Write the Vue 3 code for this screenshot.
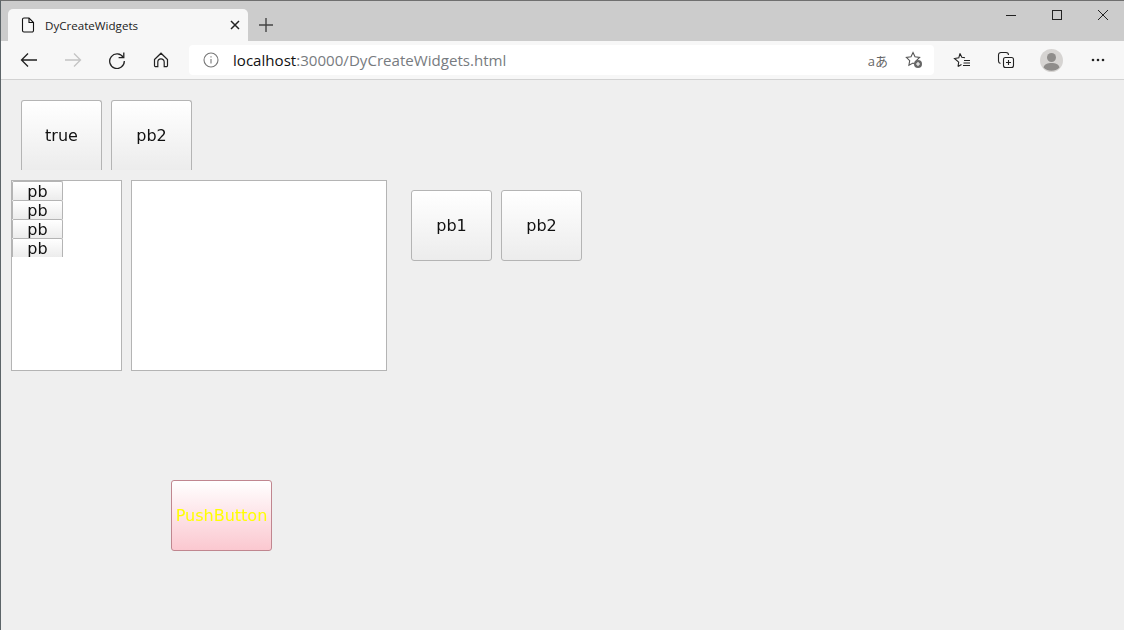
<script setup>
const topButtons = ['true', 'pb2']
const sideButtons = ['pb1', 'pb2']
const listItems = ['pb', 'pb', 'pb', 'pb']
</script>

<template>
  <div class="window">
    <!-- tab strip -->
    <div class="tabstrip">
      <div class="tab">
        <svg class="tab-icon" width="14" height="16" viewBox="0 0 14 16" fill="none" stroke="#111" stroke-width="1.1">
          <path d="M1.5 2.5a1.5 1.5 0 0 1 1.5-1.5h5l4.500 4.500v8a1.500 1.500 0 0 1-1.500 1.500h-8a1.500 1.500 0 0 1-1.500-1.500z" />
          <path d="M8 1v4.500h4.500" />
        </svg>
        <span class="tab-title">DyCreateWidgets</span>
        <svg class="tab-close" width="10" height="10" viewBox="0 0 10 10" stroke="#222" stroke-width="1.5">
          <path d="M1 1l8 8M9 1l-8 8" />
        </svg>
      </div>
      <svg class="new-tab" width="16" height="16" viewBox="0 0 16 16" stroke="#444" stroke-width="1.4">
        <path d="M8 1v14M1 8h14" />
      </svg>
      <div class="win-controls">
        <svg width="12" height="12" viewBox="0 0 12 12" stroke="#222" stroke-width="1"><path d="M1 6.500h10" /></svg>
        <svg width="12" height="12" viewBox="0 0 12 12" stroke="#222" stroke-width="1" fill="none"><rect x="1.500" y="1.500" width="9" height="9" /></svg>
        <svg width="12" height="12" viewBox="0 0 12 12" stroke="#222" stroke-width="1"><path d="M1 1l10 10M11 1L1 11" /></svg>
      </div>
    </div>

    <!-- toolbar -->
    <div class="toolbar">
      <svg class="nav-icon" width="18" height="16" viewBox="0 0 18 16" fill="none" stroke="#222" stroke-width="1.3">
        <path d="M17 8H1.500M8 1.500L1.500 8 8 14.500" />
      </svg>
      <svg class="nav-icon" width="18" height="16" viewBox="0 0 18 16" fill="none" stroke="#c4c4c4" stroke-width="1.300">
        <path d="M1 8h15.500M10 1.500L16.500 8 10 14.500" />
      </svg>
      <svg class="nav-icon" width="18" height="18" viewBox="0 0 18 18" fill="none" stroke="#222" stroke-width="1.300">
        <path d="M15.300 6.500A7.300 7.300 0 1 0 16.300 10" />
        <path d="M15.800 1.500v5.200h-5.200" />
      </svg>
      <svg class="nav-icon" width="16" height="16" viewBox="0 0 16 16" fill="none" stroke="#222" stroke-width="1.200">
        <path d="M1.500 7.500L8 1.200l6.500 6.300v6a1.200 1.200 0 0 1-1.200 1.200h-2.100V10a3.200 3.200 0 0 0-6.400 0v4.700H2.700a1.200 1.200 0 0 1-1.200-1.200z" />
      </svg>
      <div class="address">
        <svg width="16" height="16" viewBox="0 0 16 16" fill="none" stroke="#777" stroke-width="1.100">
          <circle cx="8" cy="8" r="7" />
          <path d="M8 7v4.500M8 4.200v1.200" />
        </svg>
        <span class="url"><span class="host">localhost</span>:30000/DyCreateWidgets.html</span>
        <span class="translate">aあ</span>
        <svg class="addr-star" width="18" height="18" viewBox="0 0 18 18">
          <path d="M8 1.500l2 4.300 4.600.6-3.300 3.200.8 4.600L8 12l-4.100 2.200.8-4.600L1.400 6.400 6 5.800z" fill="none" stroke="#555" stroke-width="1.100" />
          <circle cx="13" cy="13" r="4" fill="#666" />
          <path d="M13 11v4M11 13h4" stroke="#fff" stroke-width="1.100" />
        </svg>
      </div>
      <svg class="tool-icon" width="18" height="16" viewBox="0 0 18 16" fill="none" stroke="#222" stroke-width="1.100">
        <path d="M7 1.500L8.800 5.300l3.200.4M5 14.500l.7-4.300L1.500 6.500l4.300-.7L7 1.500M5 14.500l3.500-2" />
        <path d="M11 8.500h6M10.500 11h6.500M10 13.500h7" />
      </svg>
      <svg class="tool-icon" width="18" height="18" viewBox="0 0 18 18" fill="none" stroke="#222" stroke-width="1.100">
        <path d="M3.500 12.500A2.500 2.500 0 0 1 1.500 10V4a2.500 2.500 0 0 1 2.500-2.500h5A2.500 2.500 0 0 1 11.500 4" />
        <rect x="6.500" y="6.500" width="10" height="10" rx="2" />
        <path d="M11.500 9v5M9 11.500h5" />
      </svg>
      <svg class="avatar" width="23" height="23" viewBox="0 0 23 23">
        <circle cx="11.500" cy="11.500" r="11.500" fill="#d6d4d2" />
        <circle cx="11.500" cy="8.500" r="4.500" fill="#8f8d8b" />
        <path d="M3.500 18.500c1-3.500 4-4.500 8-4.500s7 1 8 4.500a11.500 11.500 0 0 1-16 0z" fill="#8f8d8b" />
      </svg>
      <svg class="more" width="14" height="4" viewBox="0 0 14 4" fill="#222">
        <circle cx="2" cy="2" r="1.300" /><circle cx="7" cy="2" r="1.300" /><circle cx="12" cy="2" r="1.300" />
      </svg>
    </div>

    <!-- page content -->
    <div class="page">
      <div class="row-top">
        <button v-for="label in topButtons" :key="label" class="qt-btn cut">{{ label }}</button>
      </div>
      <div class="row-mid">
        <div class="list-box">
          <button v-for="(label, i) in listItems" :key="i" class="list-btn">{{ label }}</button>
        </div>
        <div class="empty-box"></div>
        <div class="side-buttons">
          <button v-for="label in sideButtons" :key="label" class="qt-btn">{{ label }}</button>
        </div>
      </div>
      <button class="pink-btn">PushButton</button>
    </div>
  </div>
</template>

<style scoped>
.window {
  width: 1124px;
  height: 630px;
  overflow: hidden;
  display: flex;
  flex-direction: column;
  box-sizing: border-box;
  border-top: 1px solid #6f6f6f;
  border-left: 1px solid #5c6468;
  font-family: "Open Sans", "Noto Sans CJK JP", sans-serif;
}

.tabstrip {
  height: 40px;
  flex-shrink: 0;
  display: flex;
  align-items: flex-end;
  background: #cccccc;
  padding-left: 7px;
}

.tab {
  width: 240px;
  height: 32px;
  box-sizing: border-box;
  display: flex;
  align-items: center;
  background: #f7f7f7;
  border-radius: 5px 5px 0 0;
  padding: 0 6px 0 13px;
}

.tab-title {
  flex: 1;
  margin-left: 10px;
  font-size: 11.6px;
  color: #222;
}

.tab-close {
  margin-right: 2px;
}

.new-tab {
  margin: 0 0 8px 10px;
}

.win-controls {
  margin-left: auto;
  align-self: flex-start;
  display: flex;
  gap: 34px;
  padding: 8px 15px 0 0;
}

.toolbar {
  height: 39px;
  flex-shrink: 0;
  box-sizing: border-box;
  display: flex;
  align-items: center;
  background: #f7f7f7;
  border-bottom: 1px solid #d2d2d2;
  padding-left: 19px;
}

.nav-icon {
  margin-right: 26px;
  flex-shrink: 0;
}

.nav-icon:nth-child(3) {
  margin-right: 27px;
}

.nav-icon:nth-child(4) {
  margin-right: 20px;
}

.address {
  width: 745px;
  height: 30px;
  box-sizing: border-box;
  display: flex;
  align-items: center;
  background: #ffffff;
  border-radius: 4px;
  padding: 0 11px 0 14px;
}

.url {
  flex: 1;
  margin-left: 14px;
  font-size: 15.1px;
  color: #777b80;
}

.host {
  color: #111;
}

.translate {
  font-size: 13px;
  color: #666;
  margin-right: 17px;
}

.tool-icon {
  flex-shrink: 0;
  margin-left: 19px;
}

.tool-icon + .tool-icon {
  margin-left: 26px;
}

.avatar {
  flex-shrink: 0;
  margin-left: 25px;
}

.more {
  flex-shrink: 0;
  margin-left: 28px;
}

.page {
  flex: 1;
  background: #efefef;
  padding: 20px 0 0 10px;
  font-family: "DejaVu Sans", sans-serif;
}

.row-top {
  display: flex;
  gap: 9px;
  padding-left: 10px;
}

.qt-btn {
  width: 81px;
  height: 71px;
  padding: 0;
  box-sizing: border-box;
  border: 1px solid #b4b4b4;
  border-radius: 3px;
  background: linear-gradient(#ffffff, #ececec);
  font-family: inherit;
  font-size: 16px;
  color: #111;
  will-change: opacity;
}

.qt-btn.cut {
  height: 70px;
  border-bottom: none;
  border-radius: 3px 3px 0 0;
}

.row-mid {
  display: flex;
  align-items: flex-start;
  margin-top: 10px;
}

.list-box {
  width: 111px;
  height: 191px;
  box-sizing: border-box;
  display: flex;
  flex-direction: column;
  align-items: flex-start;
  background: #ffffff;
  border: 1px solid #b4b4b4;
}

.list-btn {
  width: 51px;
  height: 19px;
  padding: 0;
  box-sizing: border-box;
  border: 1px solid #b4b4b4;
  border-bottom: none;
  border-radius: 2px 2px 0 0;
  background: linear-gradient(#ffffff, #ececec);
  font-family: inherit;
  font-size: 16px;
  line-height: 19px;
  color: #111;
  will-change: opacity;
}

.empty-box {
  width: 256px;
  height: 191px;
  box-sizing: border-box;
  margin-left: 9px;
  background: #ffffff;
  border: 1px solid #b4b4b4;
}

.side-buttons {
  display: flex;
  gap: 9px;
  margin: 10px 0 0 24px;
}

.pink-btn {
  display: block;
  width: 101px;
  height: 71px;
  margin: 109px 0 0 160px;
  padding: 0;
  box-sizing: border-box;
  border: 1px solid #c0868f;
  border-radius: 3px;
  background: linear-gradient(#ffffff, #fbc8d0);
  font-family: inherit;
  font-size: 16px;
  color: #ffff00;
  will-change: opacity;
}
</style>
